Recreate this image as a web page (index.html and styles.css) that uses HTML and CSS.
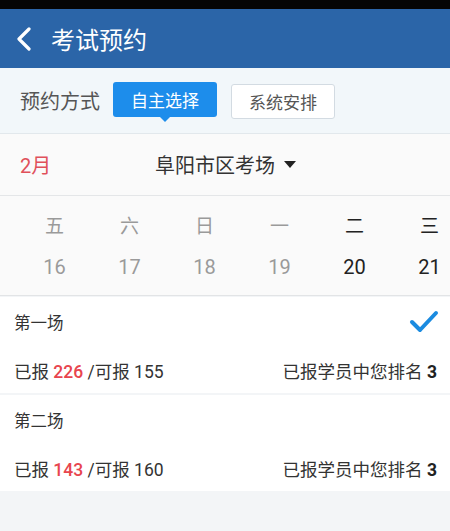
FILE: index.html
```
<!DOCTYPE html>
<html lang="zh">
<head>
<meta charset="utf-8">
<link rel="stylesheet" href="styles.css">
</head>
<body>
<div class="statusbar"></div>
<div class="header">
  <svg class="back" width="16" height="24" viewBox="0 0 16 24"><polyline points="13,2 3,12 13,22" fill="none" stroke="#fff" stroke-width="3.2" stroke-linecap="round" stroke-linejoin="round"/></svg>
  <span class="title">考试预约</span>
</div>
<div class="mode">
  <span class="mode-label">预约方式</span>
  <span class="btn btn-active">自主选择</span>
  <span class="btn btn-plain">系统安排</span>
</div>
<div class="venue">
  <span class="month">2月</span>
  <span class="place">阜阳市区考场<span class="caret"></span></span>
</div>
<div class="week">
  <div class="day past"><span class="wd">五</span><span class="dn">16</span></div>
  <div class="day past"><span class="wd">六</span><span class="dn">17</span></div>
  <div class="day past"><span class="wd">日</span><span class="dn">18</span></div>
  <div class="day past"><span class="wd">一</span><span class="dn">19</span></div>
  <div class="day"><span class="wd">二</span><span class="dn">20</span></div>
  <div class="day"><span class="wd">三</span><span class="dn">21</span></div>
</div>
<div class="card first">
  <div class="card-title"><span>第一场</span>
    <svg class="check" width="30" height="24" viewBox="0 0 30 24"><polyline points="3,12 11,20 27,3" fill="none" stroke="#1b8be0" stroke-width="4" stroke-linecap="round" stroke-linejoin="round"/></svg>
  </div>
  <div class="card-stats"><span>已报 <b class="red">226</b> /可报 155</span><span>已报学员中您排名 <b class="rank">3</b></span></div>
</div>
<div class="card">
  <div class="card-title"><span>第二场</span></div>
  <div class="card-stats"><span>已报 <b class="red">143</b> /可报 160</span><span>已报学员中您排名 <b class="rank">3</b></span></div>
</div>
</body>
</html>
```
FILE: styles.css
```
html, body {
  margin: 0;
  padding: 0;
}
body {
  width: 450px;
  height: 531px;
  overflow: hidden;
  background: #f3f5f7;
  font-family: Roboto, "Noto Sans CJK SC", sans-serif;
  color: #333;
}
.statusbar {
  height: 9px;
  background: #050505;
}
.header {
  height: 59px;
  background: #2b65a8;
  display: flex;
  align-items: center;
  padding-left: 16px;
  box-sizing: border-box;
}
.back {
  display: block;
}
.title {
  color: #fff;
  font-size: 24px;
  margin-left: 19px;
}
.mode {
  height: 66px;
  background: #f2f7fa;
  border-bottom: 1px solid #e2e8ec;
  display: flex;
  align-items: center;
  padding-left: 20px;
  box-sizing: border-box;
}
.mode-label {
  font-size: 20px;
  color: #555;
}
.btn {
  display: flex;
  align-items: center;
  justify-content: center;
  box-sizing: border-box;
  font-size: 17px;
  border-radius: 3px;
}
.btn-active {
  position: relative;
  margin-left: 13px;
  width: 104px;
  height: 35px;
  background: #1d8deb;
  color: #fff;
  margin-top: -2px;
}
.btn-active::after {
  content: "";
  position: absolute;
  left: 47px;
  bottom: -5px;
  border-left: 5px solid transparent;
  border-right: 5px solid transparent;
  border-top: 5px solid #1d8deb;
}
.btn-plain {
  margin-left: 14px;
  width: 104px;
  height: 35px;
  background: #fff;
  border: 1px solid #d3dbe2;
  color: #555;
  margin-top: 2px;
}
.venue {
  height: 62px;
  background: #fafafa;
  border-bottom: 1px solid #e4e6e8;
  display: flex;
  align-items: center;
  box-sizing: border-box;
  font-size: 20px;
}
.month {
  color: #e0505a;
  margin-left: 20px;
  width: 135px;
}
.place {
  color: #333;
  display: flex;
  align-items: center;
}
.caret {
  margin-left: 9px;
  border-left: 6px solid transparent;
  border-right: 6px solid transparent;
  border-top: 7px solid #222;
}
.week {
  height: 100px;
  background: #fafafa;
  border-bottom: 1px solid #e2e4e6;
  box-sizing: border-box;
  display: flex;
  padding-left: 17px;
  overflow: hidden;
}
.day {
  flex: 0 0 75px;
  display: flex;
  flex-direction: column;
  align-items: center;
  color: #222;
}
.wd {
  font-size: 19px;
  margin-top: 18px;
  line-height: 26px;
}
.dn {
  font-size: 20px;
  margin-top: 14px;
  line-height: 26px;
}
.past {
  color: #9a9a9a;
}
.card {
  background: #fff;
  padding: 0 13px 0 14px;
  margin-top: 2px;
}
.card.first {
  margin-top: 1px;
}
.card-title {
  height: 50px;
  display: flex;
  align-items: center;
  justify-content: space-between;
  font-size: 16.5px;
  color: #333;
}
.check {
  display: block;
  margin-right: -2px;
}
.card-stats {
  height: 46px;
  display: flex;
  align-items: center;
  justify-content: space-between;
  font-size: 17.5px;
  color: #333;
}
.red {
  color: #e8454e;
  font-weight: 500;
}
.rank {
  font-weight: 700;
  color: #222;
}
```
